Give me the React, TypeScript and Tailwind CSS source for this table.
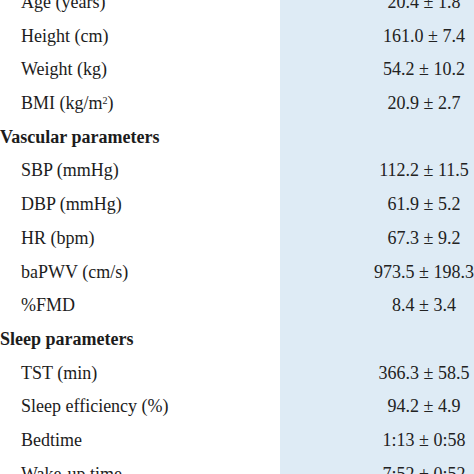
const rows: { label: React.ReactNode; value?: string; header?: boolean }[] = [
  { label: 'Age (years)', value: '20.4 ± 1.8' },
  { label: 'Height (cm)', value: '161.0 ± 7.4' },
  { label: 'Weight (kg)', value: '54.2 ± 10.2' },
  { label: <>BMI (kg/m<sup className="text-[10px]">2</sup>)</>, value: '20.9 ± 2.7' },
  { label: 'Vascular parameters', header: true },
  { label: 'SBP (mmHg)', value: '112.2 ± 11.5' },
  { label: 'DBP (mmHg)', value: '61.9 ± 5.2' },
  { label: 'HR (bpm)', value: '67.3 ± 9.2' },
  { label: 'baPWV (cm/s)', value: '973.5 ± 198.3' },
  { label: '%FMD', value: '8.4 ± 3.4' },
  { label: 'Sleep parameters', header: true },
  { label: 'TST (min)', value: '366.3 ± 58.5' },
  { label: 'Sleep efficiency (%)', value: '94.2 ± 4.9' },
  { label: 'Bedtime', value: '1:13 ± 0:58' },
  { label: 'Wake-up time', value: '7:52 ± 0:52' },
];

export default function App() {
  return (
    <div className="w-[474px] h-[474px] overflow-hidden bg-white text-[#1c1c1c] text-[18px] font-['Liberation_Serif',serif]">
      <div className="grid grid-cols-[280px_288px] -mt-[14px]">
        {rows.map((r, i) => (
          <div key={i} className="contents">
            <div
              className={
                r.header
                  ? 'h-[33.7px] leading-[33.7px] font-bold whitespace-nowrap'
                  : 'h-[33.7px] leading-[33.7px] pl-[21px] whitespace-nowrap'
              }
            >
              {r.label}
            </div>
            <div className="h-[33.7px] leading-[33.7px] bg-[#deebf5] text-center whitespace-nowrap text-[#222]">
              {r.value}
            </div>
          </div>
        ))}
        <div className="h-[40px]" />
        <div className="h-[40px] bg-[#deebf5]" />
      </div>
    </div>
  );
}
